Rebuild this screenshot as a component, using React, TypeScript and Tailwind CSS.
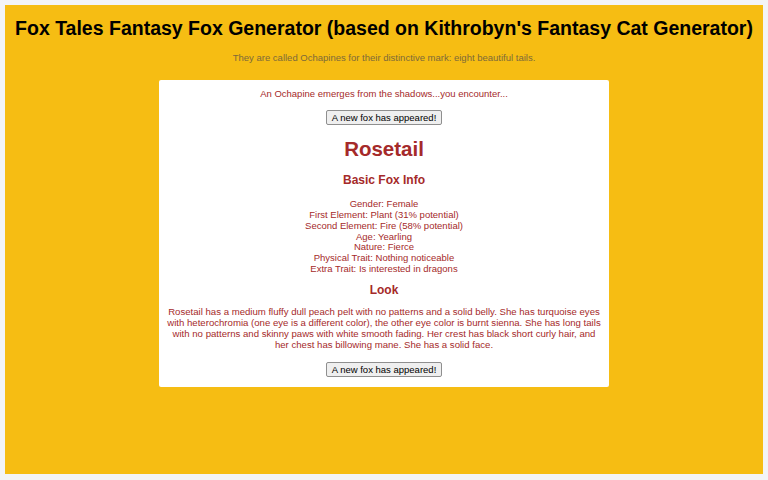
const info = [
  'Gender: Female',
  'First Element: Plant (31% potential)',
  'Second Element: Fire (58% potential)',
  'Age: Yearling',
  'Nature: Fierce',
  'Physical Trait: Nothing noticeable',
  'Extra Trait: Is interested in dragons',
];

function NewFoxButton() {
  return (
    <button
      type="button"
      className="h-[15px] rounded-[2px] border border-[#8f8f8f] bg-[#efefef] px-[5px] text-[9.5px] leading-[13px] text-black"
    >
      A new fox has appeared!
    </button>
  );
}

export default function App() {
  return (
    <div className="h-[480px] w-[768px] bg-[#f3f4f6] p-[5px] font-['Liberation_Sans',Arial,sans-serif]">
      <div className="flex h-[469px] flex-col items-center bg-[#f6bd13]">
        <h1 className="mt-[12px] text-[19.5px] font-bold leading-[23px] text-black">
          Fox Tales Fantasy Fox Generator (based on Kithrobyn's Fantasy Cat Generator)
        </h1>
        <p className="mt-[12px] text-[9.5px] leading-[11px] text-[#7d6a3a]">
          They are called Ochapines for their distinctive mark: eight beautiful tails.
        </p>

        <div className="mt-[17px] flex w-[450px] flex-col items-center rounded-[2px] bg-white px-[8px] pb-[7px] pt-[8px] text-center text-[#a52a2a]">
          <p className="text-[9.5px] leading-[11px]">An Ochapine emerges from the shadows...you encounter...</p>
          <div className="mt-[5px]">
            <NewFoxButton />
          </div>
          <h2 className="mt-[9px] text-[20.5px] font-bold leading-[24px]">Rosetail</h2>
          <h3 className="mt-[12px] text-[12px] font-bold leading-[14px]">Basic Fox Info</h3>
          <div className="mt-[12px] text-[9.5px] leading-[10.85px]">
            {info.map((line) => (
              <div key={line}>{line}</div>
            ))}
          </div>
          <h3 className="mt-[8px] text-[12px] font-bold leading-[14px]">Look</h3>
          <p className="mt-[9px] text-[9.6px] leading-[11px]">
            Rosetail has a medium fluffy dull peach pelt with no patterns and a solid belly. She has turquoise eyes
            with heterochromia (one eye is a different color), the other eye color is burnt sienna. She has long tails
            with no patterns and skinny paws with white smooth fading. Her crest has black short curly hair, and
            her chest has billowing mane. She has a solid face.
          </p>
          <div className="mt-[6px]">
            <NewFoxButton />
          </div>
        </div>
      </div>
    </div>
  );
}
